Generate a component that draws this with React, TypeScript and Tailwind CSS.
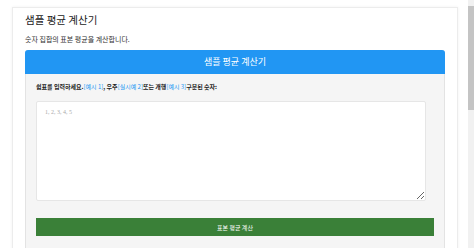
import React from "react";

const font = { fontFamily: '"Noto Sans CJK KR", "Noto Sans", sans-serif' };

const Example: React.FC<{ text: string }> = ({ text }) => (
  <span className="font-normal text-[#2196f3]">{text}</span>
);

export default function App() {
  return (
    <div className="h-[248px] overflow-hidden bg-white" style={font}>
      <div className="flex h-full">
        <div className="flex-1 pl-[12px] pr-[10px] pt-[7px]">
          <div className="h-[300px] border border-[#ececec] bg-white shadow-[0_0_3px_rgba(0,0,0,0.06)] px-[12px]">
            <h1 className="mt-[5px] text-[10.5px] leading-[14px] text-[#222]">샘플 평균 계산기</h1>
            <p className="mt-[8px] text-[7px] leading-[9px] text-[#333]">숫자 집합의 표본 평균을 계산합니다.</p>

            <div className="mt-[6px] rounded-t-[3px] border border-[#e3e3e3] bg-[#f5f5f5]">
              <div className="-mx-px -mt-px flex h-[24px] items-center justify-center rounded-t-[3px] bg-[#2196f3] text-[9px] text-white">
                샘플 평균 계산기
              </div>
              <div className="px-[10px] pb-[20px]">
                <p className="mt-[9px] text-[6px] font-bold leading-[8px] text-[#222]">
                  쉼표를 입력하세요.<Example text="[예시 1]" />, 우주<Example text="[실시예 2]" />또는 개행
                  <Example text="[예시 3]" />구분된 숫자:
                </p>
                <textarea
                  className="mt-[10px] block h-[100px] w-[390px] resize-y rounded-[2px] border border-[#e6e6e6] bg-white px-[8px] py-[6px] text-[6px] outline-none placeholder:text-[#aaa]"
                  style={{ fontFamily: '"Liberation Serif", serif' }}
                  placeholder="1, 2, 3, 4, 5"
                />
                <button className="mt-[17px] flex h-[18px] w-full items-center justify-center bg-[#3a8038] text-[6px] text-white">
                  표본 평균 계산
                </button>
              </div>
            </div>
          </div>
        </div>
        <div className="flex w-[6px] flex-col bg-[#f1f1f1]">
          <div className="mt-[6px] h-[104px] w-full bg-[#c4c4c4]" />
        </div>
      </div>
    </div>
  );
}
